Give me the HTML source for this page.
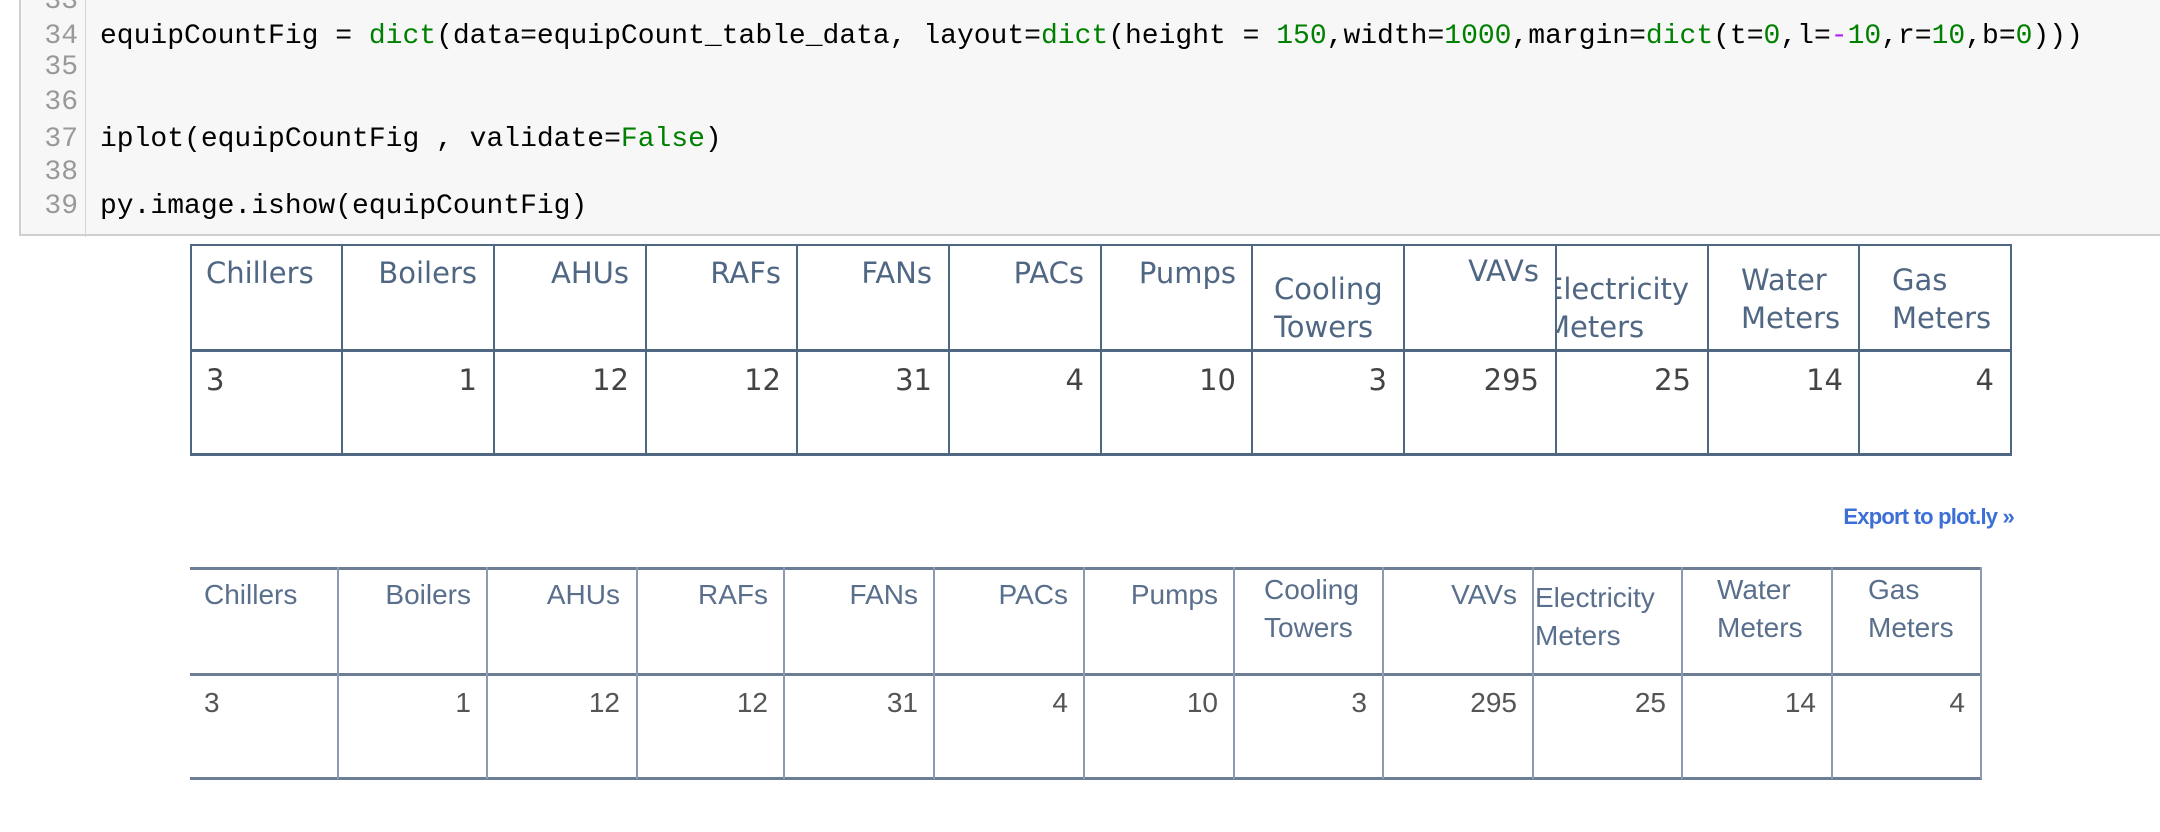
<!DOCTYPE html>
<html><head><meta charset="utf-8"><style>
html,body{margin:0;padding:0;width:2160px;height:832px;background:#fff;overflow:hidden;position:relative}
.cell{position:absolute;left:19px;top:-2px;width:2200px;height:238px;background:#f7f7f7;border:2px solid #cfcfcf;box-sizing:border-box}
.gut{position:absolute;left:85px;top:0;width:1px;height:237px;background:#d4d4d4}
.ln{position:absolute;left:30px;width:48px;text-align:right;font:28px/34px "Liberation Mono",monospace;color:#999}
.code{position:absolute;left:100px;font:28px/34px "Liberation Mono",monospace;color:#000;white-space:pre}
.g{color:#008000}.p{color:#aa22ff}
.t1 .h,.t1 .v{position:absolute;overflow:hidden;font:29px/38px "DejaVu Sans",sans-serif;text-align:right;white-space:nowrap}
.t1 .h{color:#506784}.t1 .v{color:#444}
.t2 .h,.t2 .v{position:absolute;overflow:hidden;font:28px/38px "Liberation Sans",sans-serif;text-align:right;white-space:nowrap}
.t2 .h{color:#5a6f8c}.t2 .v{color:#555}
.vl{position:absolute;width:2px;background:#506784}
.hl{position:absolute;height:3px;background:#506784}
.vl2{position:absolute;width:2px;background:#8c9bb1}
.hl2{position:absolute;height:3px;background:#6c7d96}
.exp{position:absolute;right:146px;top:504px;font:bold 22px "Liberation Sans",sans-serif;color:#3d6fd6;letter-spacing:-0.8px}
</style></head><body>
<div class="cell"></div>
<div class="gut"></div>
<div class="ln" style="top:-15px">33</div>
<div class="ln" style="top:20px">34</div>
<div class="ln" style="top:51px">35</div>
<div class="ln" style="top:86px">36</div>
<div class="ln" style="top:123px">37</div>
<div class="ln" style="top:156px">38</div>
<div class="ln" style="top:190px">39</div>
<div class="code" style="top:20px">equipCountFig = <span class="g">dict</span>(data=equipCount_table_data, layout=<span class="g">dict</span>(height = <span class="g">150</span>,width=<span class="g">1000</span>,margin=<span class="g">dict</span>(t=<span class="g">0</span>,l=<span class="p">-</span><span class="g">10</span>,r=<span class="g">10</span>,b=<span class="g">0</span>)))</div>
<div class="code" style="top:123px">iplot(equipCountFig , validate=<span class="g">False</span>)</div>
<div class="code" style="top:190px">py.image.ishow(equipCountFig)</div>

<!-- table 1 -->
<div class="t1">
<div class="hl" style="left:190px;top:244px;width:1822px;height:2px"></div>
<div class="hl" style="left:190px;top:349px;width:1822px"></div>
<div class="hl" style="left:190px;top:453px;width:1822px"></div>
<div class="vl" style="left:190px;top:244px;height:212px"></div>
<div class="vl" style="left:341px;top:244px;height:212px"></div>
<div class="vl" style="left:493px;top:244px;height:212px"></div>
<div class="vl" style="left:645px;top:244px;height:212px"></div>
<div class="vl" style="left:796px;top:244px;height:212px"></div>
<div class="vl" style="left:948px;top:244px;height:212px"></div>
<div class="vl" style="left:1100px;top:244px;height:212px"></div>
<div class="vl" style="left:1251px;top:244px;height:212px"></div>
<div class="vl" style="left:1403px;top:244px;height:212px"></div>
<div class="vl" style="left:1555px;top:244px;height:212px"></div>
<div class="vl" style="left:1707px;top:244px;height:212px"></div>
<div class="vl" style="left:1858px;top:244px;height:212px"></div>
<div class="vl" style="left:2010px;top:244px;height:212px"></div>

<div class="h" style="left:206px;top:254px;width:130px;text-align:left">Chillers</div>
<div class="h" style="left:343px;top:254px;width:134px">Boilers</div>
<div class="h" style="left:495px;top:254px;width:134px">AHUs</div>
<div class="h" style="left:647px;top:254px;width:134px">RAFs</div>
<div class="h" style="left:798px;top:254px;width:134px">FANs</div>
<div class="h" style="left:950px;top:254px;width:134px">PACs</div>
<div class="h" style="left:1102px;top:254px;width:134px">Pumps</div>
<div class="h" style="left:1274px;top:270px;width:130px;text-align:left">Cooling<br>Towers</div>
<div class="h" style="left:1405px;top:252px;width:134px">VAVs</div>
<div class="h" style="left:1557px;top:270px;width:148px;height:80px"><div style="position:absolute;left:-12px;top:0;text-align:left">Electricity<br>Meters</div></div>
<div class="h" style="left:1741px;top:261px;width:120px;text-align:left">Water<br>Meters</div>
<div class="h" style="left:1892px;top:261px;width:118px;text-align:left">Gas<br>Meters</div>

<div class="v" style="left:206px;top:361px;width:120px;text-align:left">3</div>
<div class="v" style="left:343px;top:361px;width:134px">1</div>
<div class="v" style="left:495px;top:361px;width:134px">12</div>
<div class="v" style="left:647px;top:361px;width:134px">12</div>
<div class="v" style="left:798px;top:361px;width:134px">31</div>
<div class="v" style="left:950px;top:361px;width:134px">4</div>
<div class="v" style="left:1102px;top:361px;width:134px">10</div>
<div class="v" style="left:1253px;top:361px;width:134px">3</div>
<div class="v" style="left:1405px;top:361px;width:134px">295</div>
<div class="v" style="left:1557px;top:361px;width:134px">25</div>
<div class="v" style="left:1709px;top:361px;width:134px">14</div>
<div class="v" style="left:1860px;top:361px;width:134px">4</div>
</div>

<div class="exp">Export to plot.ly »</div>

<!-- table 2 -->
<div class="t2">
<div class="hl2" style="left:190px;top:567px;width:1792px"></div>
<div class="hl2" style="left:190px;top:673px;width:1792px"></div>
<div class="hl2" style="left:190px;top:777px;width:1792px"></div>
<div class="vl2" style="left:337px;top:567px;height:212px"></div>
<div class="vl2" style="left:486px;top:567px;height:212px"></div>
<div class="vl2" style="left:636px;top:567px;height:212px"></div>
<div class="vl2" style="left:783px;top:567px;height:212px"></div>
<div class="vl2" style="left:933px;top:567px;height:212px"></div>
<div class="vl2" style="left:1083px;top:567px;height:212px"></div>
<div class="vl2" style="left:1233px;top:567px;height:212px"></div>
<div class="vl2" style="left:1382px;top:567px;height:212px"></div>
<div class="vl2" style="left:1532px;top:567px;height:212px"></div>
<div class="vl2" style="left:1681px;top:567px;height:212px"></div>
<div class="vl2" style="left:1831px;top:567px;height:212px"></div>
<div class="vl2" style="left:1980px;top:567px;height:212px"></div>

<div class="h" style="left:204px;top:576px;width:130px;text-align:left">Chillers</div>
<div class="h" style="left:339px;top:576px;width:132px">Boilers</div>
<div class="h" style="left:488px;top:576px;width:132px">AHUs</div>
<div class="h" style="left:638px;top:576px;width:130px">RAFs</div>
<div class="h" style="left:785px;top:576px;width:133px">FANs</div>
<div class="h" style="left:935px;top:576px;width:133px">PACs</div>
<div class="h" style="left:1085px;top:576px;width:133px">Pumps</div>
<div class="h" style="left:1264px;top:571px;width:118px;text-align:left">Cooling<br>Towers</div>
<div class="h" style="left:1384px;top:576px;width:133px">VAVs</div>
<div class="h" style="left:1535px;top:579px;width:145px;text-align:left">Electricity<br>Meters</div>
<div class="h" style="left:1717px;top:571px;width:120px;text-align:left">Water<br>Meters</div>
<div class="h" style="left:1868px;top:571px;width:112px;text-align:left">Gas<br>Meters</div>

<div class="v" style="left:204px;top:684px;width:120px;text-align:left">3</div>
<div class="v" style="left:339px;top:684px;width:132px">1</div>
<div class="v" style="left:488px;top:684px;width:132px">12</div>
<div class="v" style="left:638px;top:684px;width:130px">12</div>
<div class="v" style="left:785px;top:684px;width:133px">31</div>
<div class="v" style="left:935px;top:684px;width:133px">4</div>
<div class="v" style="left:1085px;top:684px;width:133px">10</div>
<div class="v" style="left:1235px;top:684px;width:132px">3</div>
<div class="v" style="left:1384px;top:684px;width:133px">295</div>
<div class="v" style="left:1534px;top:684px;width:132px">25</div>
<div class="v" style="left:1683px;top:684px;width:133px">14</div>
<div class="v" style="left:1833px;top:684px;width:132px">4</div>
</div>
</body></html>
